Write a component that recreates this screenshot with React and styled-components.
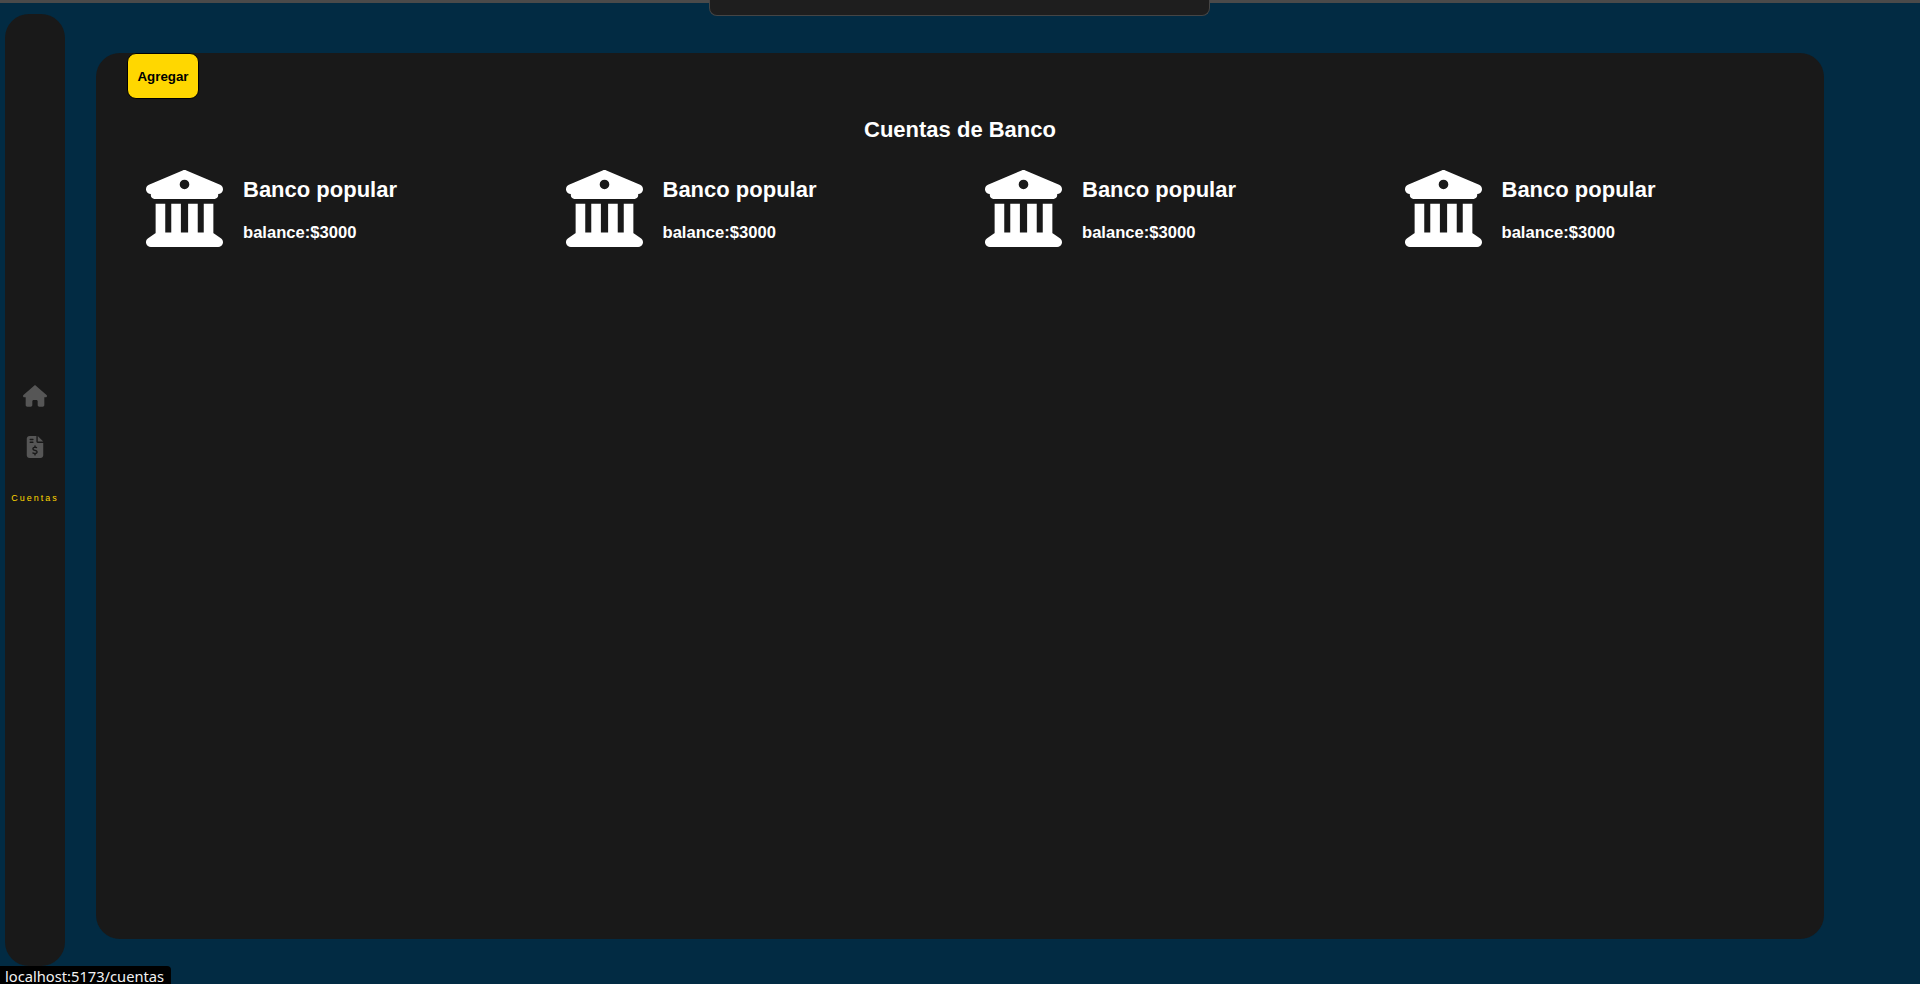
import React from 'react';
import styled, { createGlobalStyle } from 'styled-components';
import { FaBuildingColumns, FaHouse, FaFileInvoiceDollar } from 'react-icons/fa6';

const GlobalStyle = createGlobalStyle`
  html, body { margin: 0; padding: 0; height: 100%; overflow: hidden; }
  body { background: #022b43; font-family: "Liberation Sans", Arial, sans-serif; }
  * { box-sizing: border-box; }
`;

const Page = styled.div`
  height: 984px;
  background: #022b43;
  display: flex;
  flex-direction: column;
`;

const BrowserStrip = styled.div`
  height: 3px;
  flex: none;
  background: #4a4a4a;
`;

const Notch = styled.div`
  position: absolute;
  top: 0;
  left: 709px;
  width: 501px;
  height: 16px;
  background: #1e1e1e;
  border: 1px solid #454545;
  border-top: none;
  border-radius: 0 0 8px 8px;
`;

const StatusTip = styled.div`
  position: absolute;
  left: 0;
  bottom: 0;
  height: 18px;
  padding: 0 7px 0 5px;
  background: #000;
  border-top-right-radius: 4px;
  color: #f2f2f2;
  font-family: "Noto Sans", sans-serif;
  font-size: 14.7px;
  line-height: 20px;
  white-space: nowrap;
`;

const Body = styled.div`
  display: flex;
  align-items: flex-start;
  padding-left: 5px;
`;

const Sidebar = styled.nav`
  width: 60px;
  height: 952px;
  margin-top: 11px;
  padding-top: 370px;
  flex: none;
  background: #191919;
  border-radius: 24px;
  display: flex;
  flex-direction: column;
  align-items: center;
`;

const NavIcon = styled.span`
  display: flex;
  align-items: center;
  height: 24px;
  margin-bottom: 27px;
  color: #565656;
`;

const NavLabel = styled.span`
  margin-top: 7px;
  color: #ffd700;
  font-size: 9px;
  line-height: 11px;
  letter-spacing: 2px;
  white-space: nowrap;
`;

const Main = styled.main`
  width: 1728px;
  height: 886px;
  margin-top: 50px;
  margin-left: 31px;
  padding: 0 25px;
  background: #191919;
  border-radius: 24px;
`;

const AddButton = styled.button`
  display: block;
  width: 72px;
  height: 46px;
  margin-left: 6px;
  padding: 0;
  background: #ffd700;
  border: 1px solid #000;
  border-radius: 9px;
  color: #000;
  font-family: inherit;
  font-size: 13.33px;
  font-weight: 700;
`;

const Title = styled.h2`
  margin: 16px 0 0;
  color: #fff;
  font-size: 22px;
  line-height: 30px;
  font-weight: 700;
  text-align: center;
`;

const AccountGrid = styled.div`
  display: grid;
  grid-template-columns: repeat(4, 1fr);
  margin-top: 25px;
`;

const AccountCard = styled.article`
  display: flex;
  align-items: flex-start;
  gap: 20px;
  padding-left: 25px;
  color: #fff;
`;

const AccountText = styled.div`
  display: flex;
  flex-direction: column;
  padding-top: 6px;
`;

const BankName = styled.h3`
  margin: 0;
  font-size: 22px;
  line-height: 28px;
  font-weight: 700;
`;

const Balance = styled.p`
  margin: 18px 0 0;
  font-size: 16.6px;
  line-height: 21px;
  font-weight: 700;
`;

const accounts = [1, 2, 3, 4];

export default function App() {
  return (
    <Page>
      <GlobalStyle />
      <BrowserStrip />
      <Body>
        <Sidebar>
          <NavIcon><FaHouse size={24} /></NavIcon>
          <NavIcon><FaFileInvoiceDollar size={22} /></NavIcon>
          <NavLabel>Cuentas</NavLabel>
        </Sidebar>
        <Main>
          <AddButton>Agregar</AddButton>
          <Title>Cuentas de Banco</Title>
          <AccountGrid>
            {accounts.map((id) => (
              <AccountCard key={id}>
                <FaBuildingColumns size={77} />
                <AccountText>
                  <BankName>Banco popular</BankName>
                  <Balance>balance:$3000</Balance>
                </AccountText>
              </AccountCard>
            ))}
          </AccountGrid>
        </Main>
      </Body>
      <Notch />
      <StatusTip>localhost:5173/cuentas</StatusTip>
    </Page>
  );
}
